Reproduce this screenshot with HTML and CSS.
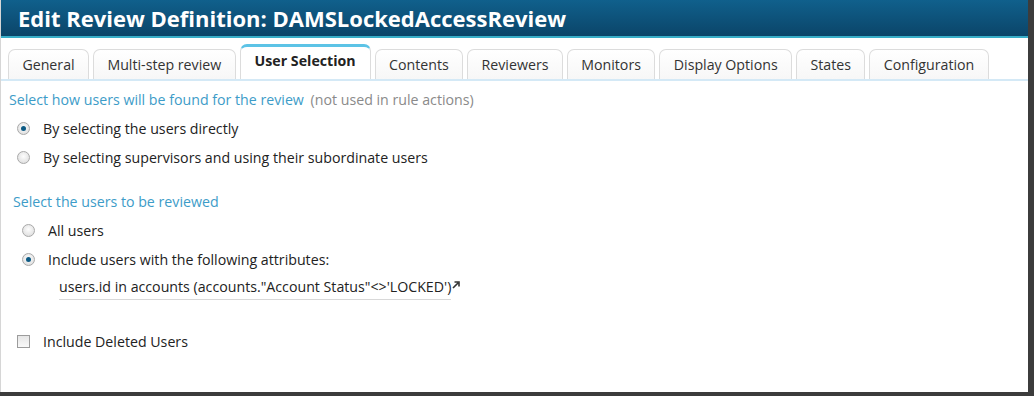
FILE: index.html
```html
<!DOCTYPE html>
<html lang="en">
<head>
    <meta charset="UTF-8">
    <title>Edit Review Definition</title>
    <link rel="stylesheet" href="styles.css">
</head>
<body>
    <div class="window">
        <div class="title-bar">Edit Review Definition: DAMSLockedAccessReview</div>

        <!-- Tabs -->
        <div class="tabs">
            <div class="tab">General</div>
            <div class="tab">Multi-step review</div>
            <div class="tab active">User Selection</div>
            <div class="tab">Contents</div>
            <div class="tab">Reviewers</div>
            <div class="tab">Monitors</div>
            <div class="tab">Display Options</div>
            <div class="tab">States</div>
            <div class="tab">Configuration</div>
        </div>

        <div class="content">
            <div class="section first">
                <div class="heading">Select how users will be found for the review <span class="note">(not used in rule actions)</span></div>
                <div class="option"><span class="radio checked"></span>By selecting the users directly</div>
                <div class="option"><span class="radio"></span>By selecting supervisors and using their subordinate users</div>
            </div>

            <div class="section second">
                <div class="heading">Select the users to be reviewed</div>
                <div class="option"><span class="radio"></span>All users</div>
                <div class="option"><span class="radio checked"></span>Include users with the following attributes:</div>
                <div class="expression">
                    <span class="expr-text">users.id in accounts (accounts."Account Status"&lt;&gt;'LOCKED')</span>
                    <svg class="link-icon" width="8" height="8" viewBox="0 0 8 8"><path d="M1 7 L6 2 M2.5 1 H7 V5.5" stroke="#333" stroke-width="1.6" fill="none"/></svg>
                </div>
            </div>

            <div class="option deleted"><span class="checkbox"></span>Include Deleted Users</div>
        </div>
    </div>
</body>
</html>
```

FILE: styles.css
```css
body {
    margin: 0;
    padding: 0;
    background: #3c3c3c;
    font-family: "Open Sans", "Noto Sans", sans-serif;
    font-size: 14.2px;
    color: #222;
}

.window {
    width: 1028px;
    height: 392px;
    background: #fff;
    border-left: 1px solid #d6d6d6;
    box-sizing: border-box;
    display: flex;
    flex-direction: column;
}

.title-bar {
    height: 36px;
    line-height: 36px;
    padding-left: 17px;
    background: linear-gradient(#10608c, #0b4569);
    border-bottom: 2px solid #38aec8;
    color: #fff;
    font-size: 22px;
    font-weight: bold;
}

/* Tabs */
.tabs {
    display: flex;
    align-items: flex-end;
    gap: 4px;
    padding-left: 7px;
    margin-top: 6px;
    border-bottom: 2px solid #d4e9f6;
}

.tab {
    height: 30px;
    line-height: 29px;
    padding: 0 13.4px;
    border: 1px solid #dcdcdc;
    border-bottom: none;
    border-radius: 7px 7px 0 0;
    background: linear-gradient(#fff, #f7f7f7);
    color: #333;
    box-sizing: border-box;
}

.tab.active {
    height: 35px;
    line-height: 28px;
    padding: 0 14px;
    border-top: 3px solid #5cc3e6;
    background: #fff;
    font-weight: bold;
    color: #222;
}

/* Content */
.content {
    padding-top: 4px;
}

.heading {
    height: 29px;
    line-height: 29px;
    color: #3d9cc8;
}

.note {
    color: #8a8a8a;
    margin-left: 3px;
}

.option {
    display: flex;
    align-items: center;
    height: 29px;
}

.section.first {
    padding-left: 8px;
}

.section.first .option {
    padding-left: 8px;
}

.section.second {
    padding-left: 12px;
    margin-top: 15px;
}

.section.second .option {
    padding-left: 9px;
}

.radio {
    width: 11px;
    height: 11px;
    border: 1px solid #a9a9a9;
    border-radius: 50%;
    background: radial-gradient(circle at 50% 40%, #fdfdfd, #d8d8d8);
    margin-right: 13px;
    position: relative;
}

.radio.checked::after {
    content: "";
    position: absolute;
    left: 3px;
    top: 3px;
    width: 5px;
    height: 5px;
    border-radius: 50%;
    background: #0d5a84;
}

.expression {
    display: flex;
    align-items: flex-start;
    height: 30px;
    padding-left: 46px;
    padding-top: 2px;
    box-sizing: border-box;
}

.expr-text {
    line-height: 22px;
    border-bottom: 1px solid #d8d8d8;
    padding-bottom: 1px;
}

.link-icon {
    margin-top: 5px;
    margin-left: 1px;
}

.option.deleted {
    margin-top: 23px;
    padding-left: 16px;
}

.checkbox {
    width: 11px;
    height: 11px;
    border: 1px solid #9c9c9c;
    background: linear-gradient(#e6e6e6, #f9f9f9);
    margin-right: 13px;
}
```
